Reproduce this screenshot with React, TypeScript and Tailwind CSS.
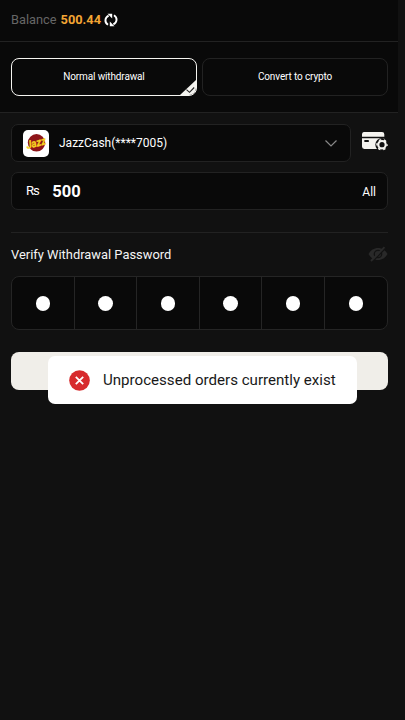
import React from 'react';

const RefreshIcon: React.FC = () => (
  <svg className="ml-[3px] h-[14px] w-[14px]" viewBox="0 0 14 14" fill="none" stroke="#ffffff" strokeWidth="1.900">
    <path d="M4 11.700C.2 9.200.8 4.600 4.600 2.600" />
    <path d="M10 2.300C13.800 4.800 13.200 9.400 9.400 11.400" />
    <path d="M3.500.8H8.200V5.400Z" fill="#ffffff" stroke="none" />
    <path d="M10.500 13.200H5.800V8.600Z" fill="#ffffff" stroke="none" />
  </svg>
);

const JazzLogo: React.FC = () => (
  <div className="flex h-[27px] w-[26px] items-center justify-center rounded-[5px] bg-white">
    <svg className="h-[24px] w-[24px] overflow-visible" viewBox="0 0 24 24">
      <circle cx="12.500" cy="11.800" r="8.700" fill="#8e1519" />
      <text
        x="12"
        y="15.700"
        textAnchor="middle"
        textLength="20"
        lengthAdjust="spacingAndGlyphs"
        transform="rotate(-14 12 12)"
        fill="#f8d321"
        stroke="#f8d321"
        strokeWidth="0.3"
        className="font-['Roboto',sans-serif] text-[11px] leading-none font-bold italic"
      >
        Jazz
      </text>
    </svg>
  </div>
);

const CardSettingsIcon: React.FC = () => (
  <svg className="h-[19px] w-[26px]" viewBox="0 0 26 19">
    <path d="M2.500 0H20a2.300 2.300 0 0 1 2.300 2.300V4.800H0V2.300A2.300 2.300 0 0 1 2.500 0Z" fill="#f5f4f0" />
    <path d="M0 6.300H22.300V17H2.500A2.400 2.400 0 0 1 0 14.600Z" fill="#f5f4f0" />
    <rect x="2.300" y="8" width="4.600" height="2" rx=".4" fill="#111111" />
    <circle cx="20" cy="12.700" r="6.700" fill="#111111" />
    <circle cx="20" cy="12.700" r="3.700" fill="none" stroke="#f5f4f0" strokeWidth="2.200" />
    <circle cx="20" cy="12.700" r="5" fill="none" stroke="#f5f4f0" strokeWidth="1.600" strokeDasharray="2.400 2.836" strokeDashoffset="1.200" />
  </svg>
);

const EyeOffIcon: React.FC = () => (
  <svg className="mb-0.5 h-[16px] w-[20px]" viewBox="0 0 20 16">
    <path d="M.5 8C2.500 4.200 6 2 10 2S17.500 4.200 19.500 8C17.500 11.800 14 14 10 14S2.500 11.800.5 8Z" fill="#292929" />
    <circle cx="10" cy="8" r="3.700" fill="#292929" stroke="#131313" strokeWidth="1.300" />
    <path d="M4.500 15.500 18 1.800" stroke="#131313" strokeWidth="1.500" />
    <path d="M3 15 16.500 1.200" stroke="#292929" strokeWidth="1.900" />
  </svg>
);

const WithdrawTabs: React.FC = () => (
  <div className="flex h-[71px] gap-[5px] border-b border-[#222222] pt-4 pr-[10px] pl-[11px] text-[10px] tracking-[-0.140px] text-white">
    <div className="relative flex h-[38px] w-[186px] items-center justify-center overflow-hidden rounded-lg border border-[#f5f4f0] pb-px">
      Normal withdrawal
      <svg className="absolute right-0 bottom-0 h-[15px] w-[16px]" viewBox="0 0 16 15">
        <path d="M16 0V15H0Z" fill="#f5f4f0" />
        <path d="M6.500 9.700 9.500 12.300 14.200 7.500" fill="none" stroke="#222222" strokeWidth="1.100" />
      </svg>
    </div>
    <div className="flex h-[38px] w-[186px] items-center justify-center rounded-lg border border-[#222222] pb-px">
      Convert to crypto
    </div>
  </div>
);

const PasswordField: React.FC = () => (
  <div className="mt-[11px] grid h-[54px] grid-cols-6 divide-x divide-[#252525] overflow-hidden rounded-lg border border-[#252525] bg-[#090909]">
    {[0, 1, 2, 3, 4, 5].map((i) => (
      <div key={i} className="flex items-center justify-center">
        <span className="h-[15px] w-[14.500px] rounded-full bg-white" />
      </div>
    ))}
  </div>
);

const Toast: React.FC = () => (
  <div className="absolute top-[4px] left-[37px] flex h-[48px] w-[309px] items-center rounded-[7px] bg-white pl-[21px]">
    <svg className="h-[21px] w-[21px]" viewBox="0 0 21 21">
      <circle cx="10.500" cy="10.500" r="10.300" fill="#d72b2d" />
      <path d="M6.800 6.800 14.200 14.200M14.200 6.800 6.800 14.200" stroke="#ffffff" strokeWidth="1.800" />
    </svg>
    <span className="ml-[13px] text-[15.100px] whitespace-nowrap text-[#191919]">Unprocessed orders currently exist</span>
  </div>
);

const App: React.FC = () => {
  return (
    <div className="h-[720px] w-[405px] overflow-hidden bg-[#111111] font-['Roboto',sans-serif]">
      <div className="w-[398px] bg-[#090909]">
        <div className="flex h-[42px] items-center border-b border-[#222222] pb-px pl-[11px] text-[12.800px]">
          <span className="text-[#666666]">Balance</span>
          <span className="ml-1 font-bold text-[#f3a534]">500.44</span>
          <RefreshIcon />
        </div>
        <WithdrawTabs />
      </div>

      <div className="ml-[11px] w-[377px] pt-[11px]">
        <div className="flex items-center">
          <div className="flex h-[38px] w-[340px] items-center rounded-[7px] border border-[#222222] bg-[#090909] pr-[13px] pl-[11px]">
            <JazzLogo />
            <span className="ml-[10px] text-[12px] text-white">JazzCash(****7005)</span>
            <svg className="ml-auto h-[7px] w-[12px]" viewBox="0 0 12 7" fill="none" stroke="#888888" strokeWidth="1.200">
              <path d="M.5.5 6 6 11.500.500" />
            </svg>
          </div>
          <div className="ml-[11px] pb-[3px]">
            <CardSettingsIcon />
          </div>
        </div>

        <div className="mt-[10px] flex h-[38px] items-center rounded-[7px] border border-[#222222] bg-[#090909] pr-[11px] pl-[14px] text-white">
          <span className="text-[13px] tracking-[-0.500px]">₨</span>
          <span className="ml-[13px] pt-0.5 text-[16.500px] font-bold">500</span>
          <span className="ml-auto pt-px text-[12px]">All</span>
        </div>

        <div className="mt-[22px] border-t border-[#222222]" />
        <div className="mt-[12px] flex h-5 items-center justify-between">
          <span className="text-[12.900px] text-[#f5f5f5]">Verify Withdrawal Password</span>
          <EyeOffIcon />
        </div>
        <PasswordField />

        <div className="relative mt-[22px] h-[38px] rounded-lg bg-[#f0eee9]">
          <Toast />
        </div>
      </div>
    </div>
  );
};

export default App;
